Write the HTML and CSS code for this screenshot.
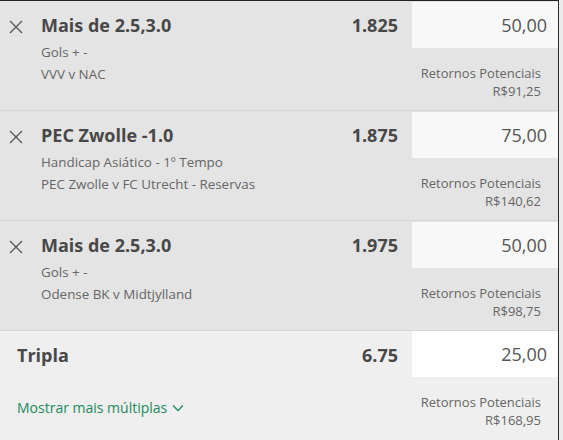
FILE: index.html
```html
<!DOCTYPE html>
<html lang="pt">
<head>
<meta charset="utf-8">
<link rel="stylesheet" href="styles.css">
</head>
<body>
<div class="slip">
  <div class="bet">
    <button class="remove" aria-label="Remover"><svg viewBox="0 0 14 14" width="14" height="14"><path d="M1 1L13 13M13 1L1 13" /></svg></button>
    <div class="info">
      <div class="title">Mais de 2.5,3.0</div>
      <div class="market">Gols + -</div>
      <div class="event">VVV v NAC</div>
    </div>
    <div class="odds">1.825</div>
    <div class="stake-col">
      <div class="stake">50,00</div>
      <div class="returns"><div>Retornos Potenciais</div><div>R$91,25</div></div>
    </div>
  </div>
  <div class="bet">
    <button class="remove" aria-label="Remover"><svg viewBox="0 0 14 14" width="14" height="14"><path d="M1 1L13 13M13 1L1 13" /></svg></button>
    <div class="info">
      <div class="title">PEC Zwolle -1.0</div>
      <div class="market">Handicap Asiático - 1º Tempo</div>
      <div class="event">PEC Zwolle v FC Utrecht - Reservas</div>
    </div>
    <div class="odds">1.875</div>
    <div class="stake-col">
      <div class="stake">75,00</div>
      <div class="returns"><div>Retornos Potenciais</div><div>R$140,62</div></div>
    </div>
  </div>
  <div class="bet">
    <button class="remove" aria-label="Remover"><svg viewBox="0 0 14 14" width="14" height="14"><path d="M1 1L13 13M13 1L1 13" /></svg></button>
    <div class="info">
      <div class="title">Mais de 2.5,3.0</div>
      <div class="market">Gols + -</div>
      <div class="event">Odense BK v Midtjylland</div>
    </div>
    <div class="odds">1.975</div>
    <div class="stake-col">
      <div class="stake">50,00</div>
      <div class="returns"><div>Retornos Potenciais</div><div>R$98,75</div></div>
    </div>
  </div>
  <div class="multi">
    <div class="info multi-info">
      <div class="title">Tripla</div>
      <a class="more" href="#">Mostrar mais múltiplas <svg viewBox="0 0 12 8" width="12" height="8"><path d="M1 1.5L6 6.5L11 1.5" /></svg></a>
    </div>
    <div class="odds">6.75</div>
    <div class="stake-col">
      <div class="stake stake-white">25,00</div>
      <div class="returns"><div>Retornos Potenciais</div><div>R$168,95</div></div>
    </div>
  </div>
</div>
</body>
</html>
```

FILE: styles.css
```css
* { box-sizing: border-box; }
html, body { margin: 0; padding: 0; }
body {
  background: #ececec;
  font-family: "Open Sans", "Noto Sans", sans-serif;
  color: #4a4a4a;
  width: 563px;
  height: 440px;
  overflow: hidden;
}
.slip {
  width: 559px;
  border-top: 1px solid #222;
  border-right: 1px solid #2a2a2a;
  height: 440px;
  background: #efefef;
}
.bet, .multi {
  display: grid;
  grid-template-columns: 41px 1fr auto 146px;
  height: 110px;
  background: #e4e4e4;
  border-bottom: 1px solid #d6d6d6;
}
.multi {
  background: #efefef;
  border-bottom: none;
  grid-template-columns: 17px 1fr auto 146px;
  height: 109px;
}
.multi-info { grid-column: 2; }
.remove {
  border: 0;
  background: none;
  padding: 0;
  margin: 19px 0 0 9px;
  width: 14px;
  height: 14px;
  align-self: start;
  display: flex;
}
.remove svg path {
  stroke: #555;
  stroke-width: 1.3;
  fill: none;
}
.info { padding-top: 11px; }
.title {
  font-size: 18px;
  font-weight: 700;
  line-height: 26px;
  color: #484848;
}
.market, .event {
  font-size: 13.4px;
  line-height: 22px;
  color: #666;
}
.market { margin-top: 3px; }
.odds {
  padding: 11px 14px 0 0;
  font-size: 18px;
  font-weight: 700;
  line-height: 26px;
  color: #484848;
}
.stake {
  height: 46px;
  background: #f8f8f8;
  margin-top: 1px;
  text-align: right;
  padding: 10px 11px 0 0;
  font-size: 18px;
  line-height: 26px;
  color: #555;
}
.stake-white { background: #fff; margin-top: 0; }
.returns {
  margin-top: 16px;
  text-align: right;
  padding-right: 17px;
  font-size: 13px;
  line-height: 18px;
  color: #666;
}
.more {
  display: inline-flex;
  align-items: center;
  gap: 5px;
  margin-top: 30px;
  font-size: 14px;
  line-height: 20px;
  color: #228a5b;
  text-decoration: none;
}
.more svg path {
  stroke: #228a5b;
  stroke-width: 1.3;
  fill: none;
}
```
